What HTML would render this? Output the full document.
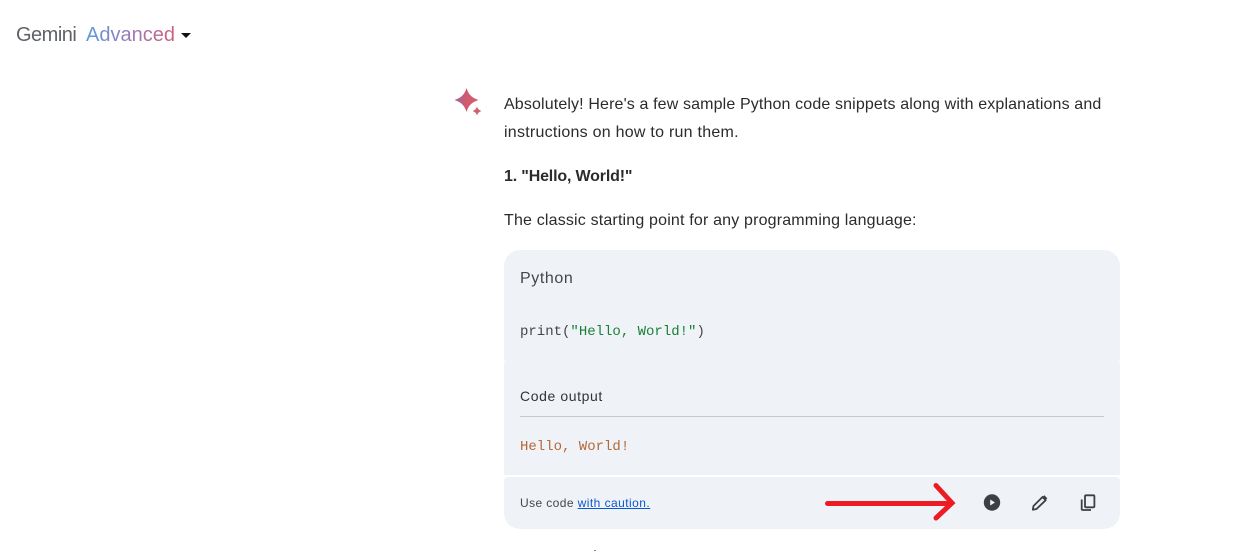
<!DOCTYPE html>
<html><head><meta charset="utf-8">
<style>
html,body{margin:0;padding:0;background:#fff;width:1237px;height:552px;overflow:hidden}
body{position:relative;font-family:"Liberation Sans",sans-serif;color:#2a2b2c}
.t{position:absolute;white-space:nowrap;font-size:16px;line-height:22px}
.m{font-family:"Liberation Mono",monospace;font-size:14px;line-height:20px}
.b{position:absolute;left:504px;width:616px;background:#eff3f8}
svg{position:absolute}
</style></head><body>
<div class="t" style="left:16px;top:23px;font-size:20px;line-height:24px;color:#5f6368;letter-spacing:-.5px">Gemini</div>
<div class="t" style="left:86px;top:23px;font-size:20px;line-height:24px;letter-spacing:0;background:linear-gradient(90deg,#5b9bd9,#8f80c0 40%,#d0607a);-webkit-background-clip:text;background-clip:text;color:transparent">Advanced</div>
<svg style="left:181px;top:33px" width="10" height="5"><path d="M0 0H10L5 5Z" fill="#111"/></svg>
<svg style="left:452px;top:86px" width="32" height="32" viewBox="0 0 32 32"><defs><linearGradient id="g" x1="0" y1="0" x2="1" y2="0"><stop offset="0" stop-color="#9a6a9c"/><stop offset=".5" stop-color="#d2596e"/><stop offset="1" stop-color="#d2606c"/></linearGradient></defs><path d="M14.500 2C16.500 8.500 19.500 11.500 26.500 14C19.500 16.500 16.500 19.500 14.500 26C12.500 19.500 9.500 16.500 2.500 14C9.500 11.500 12.500 8.500 14.500 2Z" fill="url(#g)"/><path d="M25 20.500C25.800 23 27 24.200 29.500 25C27 25.800 25.800 27 25 29.500C24.200 27 23 25.800 20.500 25C23 24.200 24.200 23 25 20.500Z" fill="#d2606c"/></svg>
<div class="t" style="left:504px;top:94px;letter-spacing:.136px">Absolutely! Here's a few sample Python code snippets along with explanations and</div>
<div class="t" style="left:504px;top:122px;letter-spacing:.25px">instructions on how to run them.</div>
<div class="t" style="left:504px;top:166px;font-weight:bold;letter-spacing:-.17px">1. "Hello, World!"</div>
<div class="t" style="left:504px;top:210px;letter-spacing:.175px">The classic starting point for any programming language:</div>
<div class="b" style="top:250px;height:225px;border-radius:16px 16px 0 0"></div>
<div style="position:absolute;left:504px;top:361px;width:2px;height:1px;background:#fff"></div>
<div style="position:absolute;left:1118px;top:361px;width:2px;height:1px;background:#fff"></div>
<div class="t" style="left:520px;top:268px;color:#444746;letter-spacing:.6px">Python</div>
<div class="t m" style="left:520px;top:322px;color:#444746">print(<span style="color:#188038">"Hello, World!"</span>)</div>
<div class="t" style="left:520px;top:386px;font-size:14px;line-height:20px;color:#333;letter-spacing:.6px">Code output</div>
<div style="position:absolute;left:520px;top:416px;width:584px;height:1px;background:#c4c7cc"></div>
<div class="t m" style="left:520px;top:437px;color:#b5683a">Hello, World!</div>
<div class="b" style="top:477px;height:52px;border-radius:4px 4px 16px 16px"></div>
<div class="t" style="left:520px;top:493px;font-size:12px;line-height:20px;color:#444746;letter-spacing:.4px">Use code <span style="color:#0b57d0;text-decoration:underline;letter-spacing:.45px">with caution.</span></div>
<svg style="left:824px;top:480px" width="134" height="42"><path d="M3.500 23.500H126" fill="none" stroke="#ed1c24" stroke-width="5" stroke-linecap="round"/><path d="M112 5.500L128 23L112 38" fill="none" stroke="#ed1c24" stroke-width="5" stroke-linecap="round" stroke-linejoin="miter"/></svg>
<svg style="left:983px;top:494px" width="18" height="18" viewBox="0 0 18 18"><circle cx="9" cy="8.500" r="8.200" fill="#3c4043"/><path d="M7.200 5.500L12 8.500L7.200 11.500Z" fill="#eff3f8"/></svg>
<svg style="left:1031px;top:494px" width="18" height="18" viewBox="0 0 18 18"><path d="M1.800 15.700L2.500 12L11.500 3L14.700 6.200L5.500 15Z" fill="none" stroke="#3c4043" stroke-width="1.800" stroke-linejoin="round"/><path d="M11 3.300L13.300 1.300L16.300 4.300L14.300 6.500Z" fill="#3c4043"/></svg>
<svg style="left:1079px;top:494px" width="18" height="18" viewBox="0 0 18 18"><rect x="6" y="1.300" width="9.400" height="12" rx="1" fill="none" stroke="#3c4043" stroke-width="1.800"/><path d="M2.700 5.500V15Q2.700 16 3.700 16H12" fill="none" stroke="#3c4043" stroke-width="1.800"/></svg>
<div style="position:absolute;left:594px;top:550px;width:2px;height:1px;background:#888"></div>
</body></html>
